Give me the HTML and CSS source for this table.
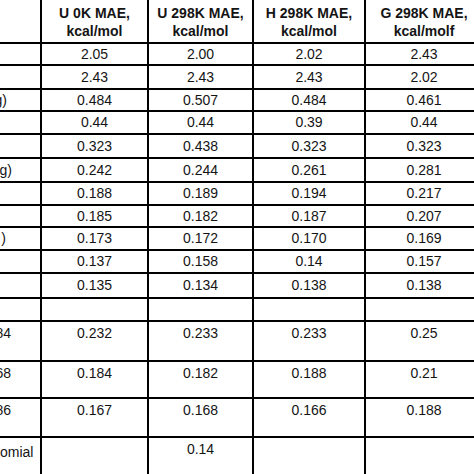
FILE: index.html
```html
<!DOCTYPE html>
<html>
<head>
<meta charset="utf-8">
<link rel="stylesheet" href="styles.css">
</head>
<body>
<table class="mae">
  <colgroup>
    <col class="c0"><col class="c1"><col class="c2"><col class="c3"><col class="c4">
  </colgroup>
  <thead>
    <tr class="head">
      <th></th>
      <th>U 0K MAE,<br>kcal/mol</th>
      <th>U 298K MAE,<br>kcal/mol</th>
      <th>H 298K MAE,<br>kcal/mol</th>
      <th>G 298K MAE,<br>kcal/molf</th>
    </tr>
  </thead>
  <tbody>
    <tr class="h22"><td></td><td>2.05</td><td>2.00</td><td>2.02</td><td>2.43</td></tr>
    <tr class="h24"><td></td><td>2.43</td><td>2.43</td><td>2.43</td><td>2.02</td></tr>
    <tr class="h22"><td><div class="lab e8">(avg)</div></td><td>0.484</td><td>0.507</td><td>0.484</td><td>0.461</td></tr>
    <tr class="h23"><td></td><td>0.44</td><td>0.44</td><td>0.39</td><td>0.44</td></tr>
    <tr class="h24"><td></td><td>0.323</td><td>0.438</td><td>0.323</td><td>0.323</td></tr>
    <tr class="h24"><td><div class="lab e13">(avg)</div></td><td>0.242</td><td>0.244</td><td>0.261</td><td>0.281</td></tr>
    <tr class="h23"><td></td><td>0.188</td><td>0.189</td><td>0.194</td><td>0.217</td></tr>
    <tr class="h22"><td></td><td>0.185</td><td>0.182</td><td>0.187</td><td>0.207</td></tr>
    <tr class="h23"><td><div class="lab e7">( )</div></td><td>0.173</td><td>0.172</td><td>0.170</td><td>0.169</td></tr>
    <tr class="h23"><td></td><td>0.137</td><td>0.158</td><td>0.14</td><td>0.157</td></tr>
    <tr class="h25"><td></td><td>0.135</td><td>0.134</td><td>0.138</td><td>0.138</td></tr>
    <tr class="h23"><td></td><td></td><td></td><td></td><td></td></tr>
    <tr class="tall h40"><td><div class="lab e12">184</div></td><td>0.232</td><td>0.233</td><td>0.233</td><td>0.25</td></tr>
    <tr class="tall h37"><td><div class="lab e12">168</div></td><td>0.184</td><td>0.182</td><td>0.188</td><td>0.21</td></tr>
    <tr class="tall h39"><td><div class="lab e12">186</div></td><td>0.167</td><td>0.168</td><td>0.166</td><td>0.188</td></tr>
    <tr class="tall h40 last"><td><div class="lab s0">omial</div></td><td></td><td>0.14</td><td></td><td></td></tr>
  </tbody>
</table>
</body>
</html>
```

FILE: styles.css
```css
html, body {
  margin: 0;
  padding: 0;
  background: #fff;
}
body {
  width: 474px;
  height: 474px;
  overflow: hidden;
  font-family: "Liberation Sans", Arial, sans-serif;
  color: #141414;
}
.mae {
  border-collapse: collapse;
  table-layout: fixed;
  width: 482px;
  font-size: 14px;
}
.c0 { width: 41px; }
.c1 { width: 107px; }
.c2 { width: 105px; }
.c3 { width: 112px; }
.c4 { width: 117px; }

.mae th, .mae td {
  border: 2px solid #000;
  padding: 0;
  text-align: center;
  white-space: nowrap;
  overflow: hidden;
}
.mae th {
  border-top: none;
  font-weight: bold;
  line-height: 18px;
  vertical-align: top;
  padding-top: 4px;
}
.mae th:first-child, .mae td:first-child {
  border-left: none;
}
.mae th:last-child, .mae td:last-child {
  border-right: none;
}
.head { height: 43px; }
.h22 { height: 22px; }
.h23 { height: 23px; }
.h24 { height: 24px; }
.h25 { height: 25px; }
.h37 { height: 37px; }
.h39 { height: 39px; }
.h40 { height: 40px; }
.mae td { line-height: 17px; vertical-align: middle; }
.tall td { vertical-align: top; padding-top: 3px; }
.last td { border-bottom: none; }

.lab {
  display: flex;
  justify-content: flex-end;
  white-space: nowrap;
}
.e8 { padding-right: 33px; }
.e13 { padding-right: 28px; }
.e7 { padding-right: 34px; }
.e12 { padding-right: 29px; }
.s0 { justify-content: flex-start; padding-left: 0; }
.tall .lab.s0 { padding-top: 3px; }
```
